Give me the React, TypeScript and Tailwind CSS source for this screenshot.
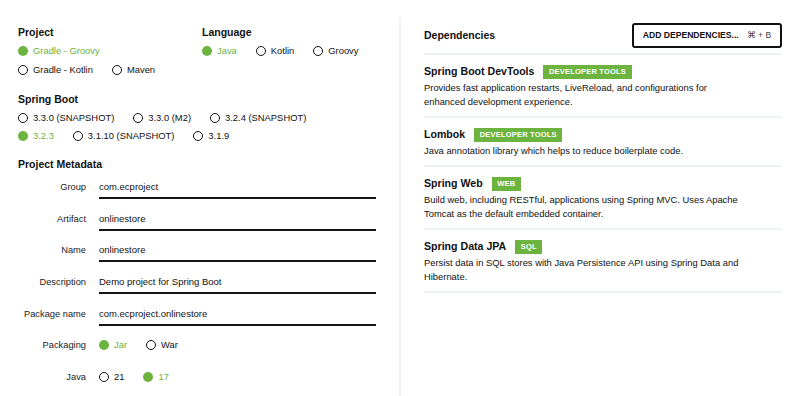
import React from 'react';

const font = { fontFamily: '"Liberation Sans", Arial, sans-serif' };

interface RadioProps {
  label: string;
  checked?: boolean;
}

const Radio: React.FC<RadioProps> = ({ label, checked }) => (
  <div className="flex items-center mr-[19px]">
    {checked ? (
      <span className="w-[10px] h-[10px] rounded-full bg-[#6db33f] mr-[5px]" />
    ) : (
      <span className="w-[10px] h-[10px] rounded-full border-[1.5px] border-[#111] mr-[5px]" />
    )}
    <span className={`text-[9.4px] leading-[12px] ${checked ? 'text-[#6db33f]' : 'text-[#111]'}`}>{label}</span>
  </div>
);

const Heading: React.FC<{ children: React.ReactNode }> = ({ children }) => (
  <h2 className="text-[10.5px] leading-[14px] font-bold text-[#111]">{children}</h2>
);

const Field: React.FC<{ label: string; value: string }> = ({ label, value }) => (
  <div className="flex items-start pt-[10px] mb-[3.7px]">
    <div className="w-[68px] text-right text-[9.3px] leading-[12px] text-[#222]">{label}</div>
    <div className="ml-[13px] w-[277px] border-b-2 border-[#151515] pb-[4px] text-[9.5px] leading-[12px] text-[#111]">
      {value}
    </div>
  </div>
);

const RadioField: React.FC<{ label: string; children: React.ReactNode }> = ({ label, children }) => (
  <div className="flex items-center h-[31.7px]">
    <div className="w-[68px] text-right text-[9.3px] leading-[12px] text-[#222]">{label}</div>
    <div className="ml-[13px] flex">{children}</div>
  </div>
);

const deps = [
  {
    name: 'Spring Boot DevTools',
    tag: 'DEVELOPER TOOLS',
    desc: ['Provides fast application restarts, LiveReload, and configurations for', 'enhanced development experience.'],
  },
  { name: 'Lombok', tag: 'DEVELOPER TOOLS', desc: ['Java annotation library which helps to reduce boilerplate code.'] },
  {
    name: 'Spring Web',
    tag: 'WEB',
    desc: ['Build web, including RESTful, applications using Spring MVC. Uses Apache', 'Tomcat as the default embedded container.'],
  },
  {
    name: 'Spring Data JPA',
    tag: 'SQL',
    desc: ['Persist data in SQL stores with Java Persistence API using Spring Data and', 'Hibernate.'],
  },
];

export default function App() {
  return (
    <div className="w-[800px] h-[396px] bg-white flex overflow-hidden" style={font}>
      <div className="w-[399px] pl-[18px] pt-[25px]">
        <div className="flex">
          <div className="w-[184px]">
            <Heading>Project</Heading>
            <div className="flex mt-[6px]">
              <Radio label="Gradle - Groovy" checked />
            </div>
            <div className="flex mt-[7px]">
              <Radio label="Gradle - Kotlin" />
              <Radio label="Maven" />
            </div>
          </div>
          <div>
            <Heading>Language</Heading>
            <div className="flex mt-[6px]">
              <Radio label="Java" checked />
              <Radio label="Kotlin" />
              <Radio label="Groovy" />
            </div>
          </div>
        </div>

        <div className="mt-[16px]">
          <Heading>Spring Boot</Heading>
          <div className="flex mt-[6px]">
            <Radio label="3.3.0 (SNAPSHOT)" />
            <Radio label="3.3.0 (M2)" />
            <Radio label="3.2.4 (SNAPSHOT)" />
          </div>
          <div className="flex mt-[6px]">
            <Radio label="3.2.3" checked />
            <Radio label="3.1.10 (SNAPSHOT)" />
            <Radio label="3.1.9" />
          </div>
        </div>

        <div className="mt-[15px]">
          <Heading>Project Metadata</Heading>
          <Field label="Group" value="com.ecproject" />
          <Field label="Artifact" value="onlinestore" />
          <Field label="Name" value="onlinestore" />
          <Field label="Description" value="Demo project for Spring Boot" />
          <Field label="Package name" value="com.ecproject.onlinestore" />
          <RadioField label="Packaging">
            <Radio label="Jar" checked />
            <Radio label="War" />
          </RadioField>
          <RadioField label="Java">
            <Radio label="21" />
            <Radio label="17" checked />
          </RadioField>
        </div>
      </div>

      <div className="flex-1 mt-[17px] border-l-2 border-[#f1f4f4] pl-[23px] pr-[18px]">
        <div className="flex items-center justify-between h-[38px] border-b-2 border-[#eef2f2]">
          <h2 className="text-[10.5px] font-bold text-[#111] mt-[2px]">Dependencies</h2>
          <button className="w-[150px] h-[25px] border-2 border-[#111] rounded-[3px] flex items-center justify-center text-[8.6px] font-bold text-[#111] mt-[1px]">
            ADD DEPENDENCIES...
            <span className="ml-[8px] font-normal text-[#444]">⌘ + B</span>
          </button>
        </div>
        {deps.map((d) => (
          <div key={d.name} className="border-b-2 border-[#eef2f2] pt-[9px] pb-[7px]">
            <div className="flex items-center h-[16px]">
              <span className="text-[10.6px] font-bold text-[#111]">{d.name}</span>
              <span className="ml-[9px] bg-[#6db33f] text-white text-[7.5px] font-bold px-[5.5px] h-[14px] leading-[14px] tracking-[0.2px]">
                {d.tag}
              </span>
            </div>
            <div className="text-[9.4px] leading-[14px] text-[#111] mt-[1px]">
              {d.desc.map((l) => (
                <div key={l}>{l}</div>
              ))}
            </div>
          </div>
        ))}
      </div>
    </div>
  );
}
